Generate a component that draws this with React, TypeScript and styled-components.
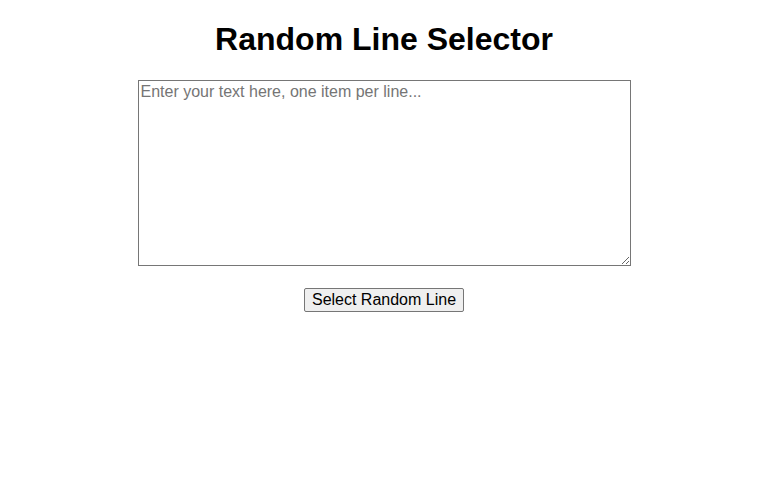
import React from "react";
import styled, { createGlobalStyle } from "styled-components";

// Base page styles
const GlobalStyle = createGlobalStyle`
  body {
    margin: 0;
    background: #ffffff;
    font-family: "Liberation Sans", Arial, sans-serif;
  }
`;

const Page = styled.main`
  display: flex;
  flex-direction: column;
  align-items: center;
`;

const Title = styled.h1`
  margin: 21px 0 22px;
  font-size: 32px;
  font-weight: bold;
  line-height: 37px;
  color: #000;
`;

const LinesInput = styled.textarea`
  box-sizing: border-box;
  width: 493px;
  height: 186px;
  margin: 0;
  padding: 2px;
  border: 1px solid #767676;
  font-family: "Liberation Sans", Arial, sans-serif;
  font-size: 16px;
  color: #000;

  &::placeholder {
    color: #757575;
  }
`;

const PickButton = styled.button`
  box-sizing: border-box;
  margin-top: 22px;
  height: 24px;
  padding: 1px 7px;
  border: 1px solid #767676;
  border-radius: 2px;
  background: #efefef;
  font-family: "Liberation Sans", Arial, sans-serif;
  font-size: 16px;
  color: #000;
  cursor: pointer;
`;

const Result = styled.p`
  margin: 16px 0 0;
  font-size: 18px;
  font-weight: bold;
`;

const App: React.FC = () => {
  const [text, setText] = React.useState("");
  const [picked, setPicked] = React.useState<string | null>(null);

  // Pick one non-empty line at random
  const pickLine = () => {
    const lines = text
      .split("\n")
      .map((l) => l.trim())
      .filter(Boolean);
    if (lines.length === 0) {
      setPicked(null);
      return;
    }
    setPicked(lines[Math.floor(Math.random() * lines.length)]);
  };

  return (
    <Page>
      <GlobalStyle />
      <Title>Random Line Selector</Title>
      <LinesInput
        value={text}
        onChange={(e) => setText(e.target.value)}
        placeholder="Enter your text here, one item per line..."
      />
      <PickButton onClick={pickLine}>Select Random Line</PickButton>
      {picked && <Result>{picked}</Result>}
    </Page>
  );
};

export default App;
